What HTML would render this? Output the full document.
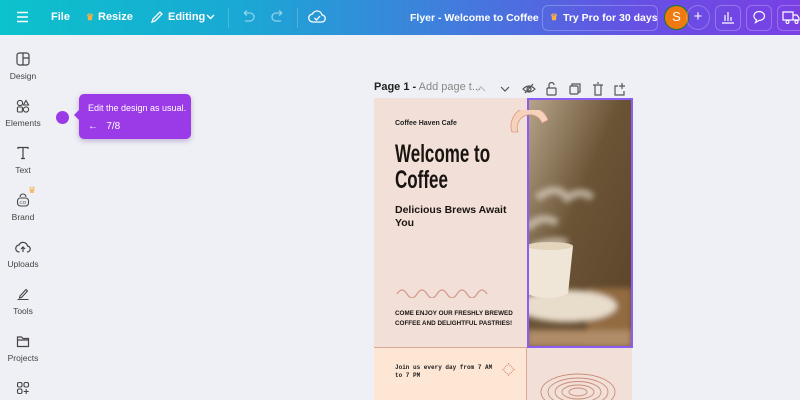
<!DOCTYPE html>
<html><head><style>
*{margin:0;padding:0;box-sizing:border-box}
body{width:800px;height:400px;overflow:hidden;background:#eff0f5;font-family:"Liberation Sans",sans-serif;position:relative}
.hdr{position:absolute;left:0;top:0;width:800px;height:35px;background:linear-gradient(90deg,#0cc2cc 0%,#1aa8d4 30%,#3f7fdc 55%,#6650e4 80%,#7a40e4 100%);color:#fff;font-size:11px;font-weight:bold}
.hdr span{position:absolute;top:11px;white-space:nowrap}
.btn{position:absolute;top:5px;height:26px;border:1px solid rgba(255,255,255,.25);border-radius:6px}
.side{position:absolute;left:0;top:35px;width:46px;height:365px}
.it{position:absolute;left:0;width:46px;text-align:center;font-size:8.5px;color:#444}
.it svg{display:block;margin:0 auto 5px}
.abs{position:absolute}
</style></head><body>
<div class="hdr">
 <svg class="abs" style="left:16px;top:11px" width="13" height="12"><path d="M1 1.5h11M1 6h11M1 10.5h11" stroke="#fff" stroke-width="1.4"/></svg>
 <span style="left:51px">File</span>
 <span style="left:86px;color:#f6b04a;font-size:9px;top:12px">♛</span>
 <span style="left:98px">Resize</span>
 <svg class="abs" style="left:150px;top:10px" width="14" height="14"><path d="M2 12l1-3 7-7 2 2-7 7z" fill="none" stroke="#fff" stroke-width="1.3"/></svg>
 <span style="left:168px">Editing</span>
 <svg class="abs" style="left:206px;top:14px" width="9" height="6"><path d="M1 1l3.5 3.5L8 1" fill="none" stroke="#fff" stroke-width="1.4"/></svg>
 <div class="abs" style="left:228px;top:8px;width:1px;height:20px;background:rgba(255,255,255,.2)"></div>
 <svg class="abs" style="left:240px;top:10px" width="16" height="14"><path d="M4 3h6a4 4 0 010 8H5M4 3l3-2.5M4 3l3 2.5" fill="none" stroke="rgba(255,255,255,.5)" stroke-width="1.3"/></svg>
 <svg class="abs" style="left:270px;top:10px" width="16" height="14"><path d="M12 3H6a4 4 0 000 8h5M12 3L9 .5M12 3L9 5.5" fill="none" stroke="rgba(255,255,255,.5)" stroke-width="1.3"/></svg>
 <div class="abs" style="left:297px;top:8px;width:1px;height:20px;background:rgba(255,255,255,.2)"></div>
 <svg class="abs" style="left:308px;top:9px" width="18" height="16"><path d="M5 13a4 4 0 01-.5-8A5 5 0 0114 6a3.5 3.5 0 01-.5 7z M6.5 9l2 2 3.5-4" fill="none" stroke="#fff" stroke-width="1.3"/></svg>
 <span style="left:410px;font-size:10.5px;top:12px">Flyer - Welcome to Coffee</span>
 <div class="btn" style="left:542px;width:116px"></div>
 <span style="left:550px;color:#f6b04a;font-size:9px;top:12px">♛</span>
 <span style="left:563px;font-size:10.5px;top:12px">Try Pro for 30 days</span>
 <div class="abs" style="left:664px;top:5px;width:25px;height:25px;border-radius:50%;background:#f07a10;border:1.5px solid #1a7a2a;text-align:center;line-height:22px;font-weight:normal;font-size:13px">S</div>
 <div class="abs" style="left:686px;top:5px;width:24px;height:25px;border-radius:50%;border:1px solid rgba(255,255,255,.25);text-align:center;line-height:22px;font-size:15px;font-weight:normal">+</div>
 <div class="btn" style="left:715px;width:26px"></div>
 <svg class="abs" style="left:721px;top:10px" width="14" height="14"><path d="M1 13h12M4 11V5M7 11V2M10 11V7" stroke="#fff" stroke-width="1.2"/></svg>
 <div class="btn" style="left:746px;width:26px"></div>
 <svg class="abs" style="left:752px;top:10px" width="14" height="14"><path d="M7 1.5a5.5 4.5 0 110 9l-3.5 2 1-2.7A5.5 4.5 0 017 1.5z" fill="none" stroke="#fff" stroke-width="1.2"/></svg>
 <div class="btn" style="left:777px;width:30px"></div>
 <svg class="abs" style="left:782px;top:10px" width="18" height="14"><path d="M1 2h10v8H1zM11 5h4l2 3v2h-6M4 12a1.5 1.5 0 100-.1M13 12a1.5 1.5 0 100-.1" fill="none" stroke="#fff" stroke-width="1.2"/></svg>
</div>
<div class="side">
 <div class="it" style="top:17px"><svg width="14" height="14"><rect x="1" y="1" width="12" height="12" rx="2.5" fill="none" stroke="#444" stroke-width="1.2"/><path d="M7 1v12M7 6h6" stroke="#444" stroke-width="1.2"/></svg>Design</div>
 <div class="it" style="top:64px"><svg width="14" height="14"><circle cx="4" cy="4" r="2.6" fill="none" stroke="#444" stroke-width="1.1"/><path d="M10 1.5l2.6 4.5H7.4z" fill="none" stroke="#444" stroke-width="1.1"/><rect x="1.4" y="8" width="5" height="5" rx="1" fill="none" stroke="#444" stroke-width="1.1"/><circle cx="10" cy="10.5" r="2.6" fill="none" stroke="#444" stroke-width="1.1"/></svg>Elements</div>
 <div class="it" style="top:111px"><svg width="14" height="14"><path d="M2 3V1.5h10V3M7 1.5v11M5 12.5h4" fill="none" stroke="#444" stroke-width="1.2"/></svg>Text</div>
 <div class="it" style="top:158px"><svg width="14" height="14"><rect x="1.5" y="5" width="11" height="8" rx="3" fill="none" stroke="#444" stroke-width="1.1"/><path d="M4 4a3 3 0 016 0" fill="none" stroke="#444" stroke-width="1.1"/><text x="3.5" y="11" font-size="4.5" fill="#444" font-family="Liberation Sans">CO</text></svg>Brand</div>
 <span class="abs" style="left:28px;top:150px;color:#f5a83a;font-size:9px">♛</span>
 <div class="it" style="top:205px"><svg width="16" height="14"><path d="M4.5 12a3.5 3.5 0 01-.5-7A4.5 4.5 0 0112.5 6a3 3 0 01-.5 6M8 12V7M6 9l2-2 2 2" fill="none" stroke="#444" stroke-width="1.2"/></svg>Uploads</div>
 <div class="it" style="top:252px"><svg width="14" height="14"><path d="M4 9l6-6.5 1.5 1.5-6 6.5-2 .5zM1.5 12.5h11" fill="none" stroke="#444" stroke-width="1.1"/></svg>Tools</div>
 <div class="it" style="top:299px"><svg width="14" height="14"><path d="M1.5 3h4l1.5 1.5h5.5v8h-11zM1.5 6h11" fill="none" stroke="#444" stroke-width="1.2"/></svg>Projects</div>
 <div class="it" style="top:346px"><svg width="14" height="14"><rect x="1.5" y="1.5" width="4.5" height="4.5" rx="1.5" fill="none" stroke="#444" stroke-width="1.1"/><rect x="8" y="1.5" width="4.5" height="4.5" rx="1.5" fill="none" stroke="#444" stroke-width="1.1"/><rect x="1.5" y="8" width="4.5" height="4.5" rx="1.5" fill="none" stroke="#444" stroke-width="1.1"/><path d="M10.2 8v5M7.7 10.5h5" stroke="#444" stroke-width="1.1"/></svg></div>
</div>
<div class="abs" style="left:56px;top:111px;width:13px;height:13px;border-radius:50%;background:#9b3be8"></div>
<div class="abs" style="left:79px;top:94px;width:112px;height:45px;border-radius:5px;background:#9b3be8;box-shadow:0 2px 6px rgba(80,40,140,.3);color:#fff;font-size:9px">
 <div class="abs" style="left:-5px;top:16px;width:0;height:0;border-top:5px solid transparent;border-bottom:5px solid transparent;border-right:5px solid #9b3be8"></div>
 <div class="abs" style="left:9px;top:9px;white-space:nowrap">Edit the design as usual.</div>
 <div class="abs" style="left:9px;top:27px;font-size:10px">←&nbsp;&nbsp;&nbsp;7/8</div>
</div>
<div class="abs" style="left:374px;top:81px;font-size:11px;color:#222"><b>Page 1 -</b> <span style="color:#888">Add page t...</span></div>
<svg class="abs" style="left:475px;top:82px" width="160" height="14" fill="none" stroke="#555" stroke-width="1.2">
 <path d="M2 9l4-4 4 4" stroke="#bbb"/><path d="M26 5l4 4 4-4"/>
 <path d="M48 7q6-6 12 0q-6 6-12 0zM50 11l8-9"/><circle cx="54" cy="7" r="2"/>
 <rect x="72" y="6" width="9" height="7" rx="1"/><path d="M74 6V3a2.5 2.5 0 015 0"/>
 <rect x="95" y="4" width="8" height="8" rx="1"/><path d="M97 4V2h8v8h-2"/>
 <path d="M118 3h10M120 3v10h6V3M122 1h2"/>
 <path d="M143 4h-3v9h9V9M147 1v6M144 4h6"/>
</svg>
<div class="abs" style="left:374px;top:98px;width:153px;height:249px;background:#f2e0d8"></div>
<svg class="abs" style="left:527px;top:98px" width="105" height="249">
 <defs><linearGradient id="g" x1="0" y1="0" x2="1" y2="1"><stop offset="0" stop-color="#b8a68c"/><stop offset=".45" stop-color="#6b5436"/><stop offset="1" stop-color="#5a4228"/></linearGradient>
 <filter id="b"><feGaussianBlur stdDeviation="3"/></filter></defs>
 <rect width="105" height="249" fill="url(#g)"/>
 <g filter="url(#b)">
 <rect x="60" y="190" width="45" height="60" fill="#a87a48" opacity=".7"/>
 <path d="M10 100q20-15 30 0q15-10 25 0M0 130q15-15 30-5M5 150q20-10 35-5" stroke="#e8e0d4" stroke-width="8" fill="none" opacity=".6"/>
 <ellipse cx="40" cy="208" rx="50" ry="16" fill="#e8dccb"/>
 <rect x="0" y="232" width="105" height="17" fill="#b08c68"/>
 </g>
 <path d="M0 148h46l-5 48q-20 8-41 0z" fill="#f0e6d8"/>
 <ellipse cx="23" cy="148" rx="23" ry="4" fill="#e4d4bc"/>
</svg>
<div class="abs" style="left:527px;top:98px;width:106px;height:250px;border:2px solid #8b5cf6"></div>
<svg class="abs" style="left:508px;top:110px" width="40" height="24"><path d="M4 22a16 16 0 0136-12l-6 3a10 10 0 00-24 9z" fill="#f6d2bc" stroke="#d89a82" stroke-width=".8"/></svg>
<div class="abs" style="left:395px;top:120px;font-size:7px;font-weight:bold;color:#222">Coffee Haven Cafe</div>
<div class="abs" style="left:395px;top:141px;font-size:25px;line-height:26px;font-weight:bold;color:#1a1410;transform:scaleX(.68);transform-origin:left;white-space:nowrap">Welcome to<br>Coffee</div>
<div class="abs" style="left:395px;top:204px;font-size:10.5px;line-height:13px;font-weight:bold;color:#1a1410">Delicious Brews Await<br>You</div>
<svg class="abs" style="left:396px;top:286px" width="95" height="12"><path d="M1 8q5-8 10 0t10 0 10 0 10 0 10 0 10 0 10 0 10 0 10 0" fill="none" stroke="#d09a8a" stroke-width="1.2"/></svg>
<div class="abs" style="left:395px;top:309px;font-size:6.3px;line-height:9.5px;font-weight:bold;color:#1a1410">COME ENJOY OUR FRESHLY BREWED<br>COFFEE AND DELIGHTFUL PASTRIES!</div>
<div class="abs" style="left:374px;top:347px;width:153px;height:53px;background:#fde6d4;border-top:1px solid #d8a898;border-right:1px solid #d8a898"></div>
<div class="abs" style="left:527px;top:348px;width:105px;height:52px;background:#f2e0d8"></div>
<div class="abs" style="left:395px;top:364px;font-size:6px;line-height:8px;font-family:'Liberation Mono',monospace;font-weight:bold;color:#222">Join us every day from 7 AM<br>to 7 PM</div>
<div class="abs" style="left:504px;top:365px;width:9px;height:9px;border:1.5px dotted #c9826e;transform:rotate(45deg)"></div>
<svg class="abs" style="left:538px;top:370px" width="80" height="30" fill="none" stroke="#c98c78" stroke-width=".9"><ellipse cx="40" cy="22" rx="37" ry="18"/><ellipse cx="40" cy="22" rx="30" ry="14"/><ellipse cx="40" cy="22" rx="23" ry="10.5"/><ellipse cx="40" cy="22" rx="16" ry="7"/><ellipse cx="40" cy="22" rx="9" ry="4"/></svg>
</body></html>
